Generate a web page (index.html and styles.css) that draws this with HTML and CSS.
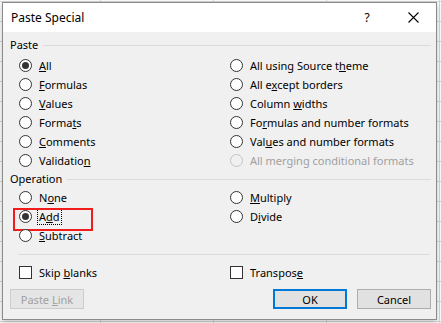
FILE: index.html
```html
<!DOCTYPE html>
<html lang="en">

<head>
  <meta charset="UTF-8">
  <title>Paste Special</title>
  <link rel="stylesheet" href="styles.css">
</head>

<body>
  <div class="dialog">
    <div class="titlebar">
      <span class="title">Paste Special</span>
      <span class="help">?</span>
      <span class="close">
        <svg width="11" height="11" viewBox="0 0 11 11">
          <path d="M0.5 0.5 L10.5 10.5 M10.5 0.5 L0.5 10.5" stroke="#000" stroke-width="1.1" fill="none" />
        </svg>
      </span>
    </div>

    <div class="content">
      <div class="group-title"><span>Paste</span></div>
      <div class="options paste-options">
        <label class="opt"><span class="radio checked"></span><span><u>A</u>ll</span></label>
        <label class="opt"><span class="radio"></span><span><u>F</u>ormulas</span></label>
        <label class="opt"><span class="radio"></span><span><u>V</u>alues</span></label>
        <label class="opt"><span class="radio"></span><span>Forma<u>t</u>s</span></label>
        <label class="opt"><span class="radio"></span><span><u>C</u>omments</span></label>
        <label class="opt"><span class="radio"></span><span>Validatio<u>n</u></span></label>
        <label class="opt"><span class="radio"></span><span>All using Source t<u>h</u>eme</span></label>
        <label class="opt"><span class="radio"></span><span>All e<u>x</u>cept borders</span></label>
        <label class="opt"><span class="radio"></span><span>Column <u>w</u>idths</span></label>
        <label class="opt"><span class="radio"></span><span>Fo<u>r</u>mulas and number formats</span></label>
        <label class="opt"><span class="radio"></span><span>Val<u>u</u>es and number formats</span></label>
        <label class="opt disabled"><span class="radio"></span><span>All mer<u>g</u>ing conditional formats</span></label>
      </div>

      <div class="group-title op-title"><span>Operation</span></div>
      <div class="options op-options">
        <label class="opt"><span class="radio"></span><span>N<u>o</u>ne</span></label>
        <label class="opt highlighted"><span class="radio checked"></span><span class="focused">A<u>d</u>d</span></label>
        <label class="opt"><span class="radio"></span><span><u>S</u>ubtract</span></label>
        <label class="opt"><span class="radio"></span><span><u>M</u>ultiply</span></label>
        <label class="opt"><span class="radio"></span><span>D<u>i</u>vide</span></label>
      </div>

      <div class="separator"></div>

      <div class="options checks">
        <label class="opt"><span class="checkbox"></span><span>Skip <u>b</u>lanks</span></label>
        <label class="opt"><span class="checkbox"></span><span>Transpos<u>e</u></span></label>
      </div>

      <div class="buttons">
        <button class="btn" disabled>Paste <u>L</u>ink</button>
        <span class="spacer"></span>
        <button class="btn primary">OK</button>
        <button class="btn">Cancel</button>
      </div>
    </div>
  </div>
</body>

</html>
```

FILE: styles.css
```css
* {
  box-sizing: border-box;
  margin: 0;
  padding: 0;
  font-family: 'Noto Sans', sans-serif;
}

body {
  width: 441px;
  height: 323px;
  overflow: hidden;
  padding: 2px 0 0 2px;
  background-color: #fff;
  background-image:
    linear-gradient(to right, #d6d6d6 1px, transparent 1px),
    linear-gradient(to bottom, #d6d6d6 1px, transparent 1px);
  background-size: 113px 20px;
  background-position: 100px 1px;
  font-size: 12px;
  color: #000;
}

.dialog {
  width: 435px;
  height: 318px;
  border: 1px solid #8a8a8a;
  background: #f0f0f0;
  box-shadow: 0 2px 6px rgba(0, 0, 0, 0.25);
  display: flex;
  flex-direction: column;
}

/* title bar */
.titlebar {
  height: 29px;
  background: #fff;
  display: flex;
  align-items: center;
  padding-left: 8px;
}

.title {
  flex: 1;
  font-size: 12px;
}

.help {
  width: 46px;
  text-align: center;
  font-size: 12px;
}

.close {
  width: 46px;
  display: flex;
  justify-content: center;
  align-items: center;
}

/* content */
.content {
  flex: 1;
  padding: 0 5px 0 7px;
  font-size: 11px;
}

.group-title {
  display: flex;
  align-items: center;
  height: 16px;
  line-height: 16px;
  margin-top: 5px;
}

.group-title::after {
  content: '';
  flex: 1;
  height: 1px;
  background: #dcdcdc;
  margin-left: 5px;
}

.op-title {
  margin-top: 1px;
}

.options {
  display: grid;
  grid-template-columns: 211px 1fr;
  grid-auto-flow: column;
  margin-left: 9px;
}

.paste-options {
  grid-template-rows: repeat(6, 19px);
  margin-top: 3px;
}

.op-options {
  grid-template-rows: repeat(3, 19px);
  margin-top: 1px;
}

.checks {
  grid-template-rows: 19px;
  margin-top: 8px;
}

.opt {
  display: flex;
  align-items: center;
  gap: 7px;
  white-space: nowrap;
  position: relative;
}

.radio {
  width: 13px;
  height: 13px;
  border: 1px solid #333;
  border-radius: 50%;
  background: #fff;
  display: flex;
  justify-content: center;
  align-items: center;
  flex: none;
}

.radio.checked::after {
  content: '';
  width: 7px;
  height: 7px;
  border-radius: 50%;
  background: #333;
}

.checkbox {
  width: 13px;
  height: 13px;
  border: 1px solid #333;
  background: #fff;
  flex: none;
}

.disabled {
  color: #a0a0a0;
}

.disabled .radio {
  border-color: #c4c4c4;
  background: #f0f0f0;
}

.highlighted::before {
  content: '';
  position: absolute;
  left: -6px;
  top: 1px;
  width: 76px;
  height: 19px;
  border: 2px solid #f21c1c;
}

.focused {
  outline: 1px dotted #000;
  line-height: 14px;
  padding: 0 1px;
  margin-left: -1px;
}

.separator {
  height: 1px;
  background: #dcdcdc;
  margin: 9px 1px 0 8px;
}

/* buttons */
.buttons {
  display: flex;
  gap: 10px;
  margin-top: 7px;
}

.spacer {
  flex: 1;
}

.btn {
  width: 74px;
  height: 20px;
  font-size: 11px;
  border: 1px solid #adadad;
  background: #e1e1e1;
  color: #000;
}

.btn:disabled {
  color: #a0a0a0;
  border-color: #cccccc;
  background: #e5e5e5;
}

.btn.primary {
  border: 2px solid #0078d7;
}
```
